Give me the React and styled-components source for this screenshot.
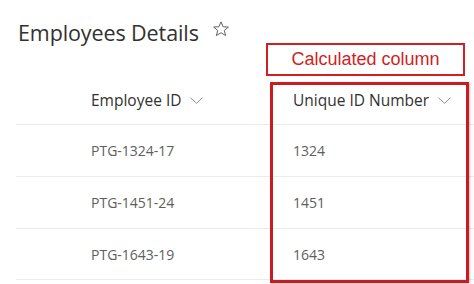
import React from 'react';
import styled, { createGlobalStyle } from 'styled-components';

const GlobalStyle = createGlobalStyle`
  html, body {
    margin: 0;
    padding: 0;
    background: #ffffff;
  }
  body {
    font-family: "Open Sans", "Noto Sans", sans-serif;
    color: #323130;
  }
`;

const Page = styled.div`
  position: relative;
  width: 474px;
  height: 284px;
  overflow: hidden;
  background: #fff;
`;

const TitleBar = styled.div`
  display: flex;
  align-items: center;
  gap: 13px;
  height: 64px;
  padding: 0 0 0 18px;
  box-sizing: border-box;
`;

const Title = styled.h1`
  margin: 0;
  font-size: 21.5px;
  font-weight: 400;
  color: #323130;
  letter-spacing: -0.1px;
`;

const StarIcon = styled.svg`
  width: 18px;
  height: 18px;
  margin-top: -6px;
`;

const Table = styled.div`
  margin-left: 16px;
  margin-top: 12px;
`;

const Row = styled.div`
  display: grid;
  grid-template-columns: 277px 1fr;
  align-items: center;
  height: ${p => (p.$header ? '48px' : '52px')};
  border-top: ${p => (p.$header ? 'none' : '1px solid #edebe9')};
  border-bottom: ${p => (p.$last ? '1px solid #edebe9' : 'none')};
  box-sizing: border-box;
`;

const HeaderCell = styled.div`
  display: flex;
  align-items: center;
  gap: 8px;
  padding-left: ${p => p.$first ? '75px' : '0'};
  font-size: 15.5px;
  font-weight: 500;
  color: #323130;
`;

const Cell = styled.div`
  padding-left: ${p => p.$first ? '75px' : '0'};
  font-size: 14px;
  color: #605e5c;
`;

const Chevron = styled.svg`
  width: 15px;
  height: 15px;
`;

const Callout = styled.div`
  position: absolute;
  left: 266px;
  top: 43px;
  width: 199px;
  height: 33px;
  box-sizing: border-box;
  border: 2px solid #d11f24;
  display: flex;
  align-items: center;
  justify-content: center;
  font-family: "Liberation Sans", Arial, sans-serif;
  font-size: 18px;
  color: #d11f24;
`;

const Highlight = styled.div`
  position: absolute;
  left: 270px;
  top: 82px;
  width: 199px;
  height: 201px;
  box-sizing: border-box;
  border: 3px solid #cc1a21;
  box-shadow: 1px 1px 2px rgba(0,0,0,0.25);
  pointer-events: none;
`;

const ChevronDown = () => (
  <Chevron viewBox="0 0 16 16" fill="none" stroke="#8a8886" strokeWidth="1">
    <path d="M1.5 5 L8 11 L14.5 5" />
  </Chevron>
);

const rows = [
  { id: 'PTG-1324-17', num: '1324' },
  { id: 'PTG-1451-24', num: '1451' },
  { id: 'PTG-1643-19', num: '1643' },
];

export default function App() {
  return (
    <Page>
      <GlobalStyle />
      <TitleBar>
        <Title>Employees Details</Title>
        <StarIcon viewBox="0 0 24 24" fill="none" stroke="#605e5c" strokeWidth="1.3" strokeLinejoin="round">
          <path d="M12 2.5 L14.8 9 L21.8 9.4 L16.4 13.9 L18.2 20.8 L12 17 L5.8 20.8 L7.6 13.9 L2.2 9.4 L9.2 9 Z" />
        </StarIcon>
      </TitleBar>
      <Table>
        <Row $header>
          <HeaderCell $first>Employee ID <ChevronDown /></HeaderCell>
          <HeaderCell>Unique ID Number <ChevronDown /></HeaderCell>
        </Row>
        {rows.map((r, i) => (
          <Row key={r.id} $last={i === rows.length - 1}>
            <Cell $first>{r.id}</Cell>
            <Cell>{r.num}</Cell>
          </Row>
        ))}
      </Table>
      <Callout>Calculated column</Callout>
      <Highlight />
    </Page>
  );
}
